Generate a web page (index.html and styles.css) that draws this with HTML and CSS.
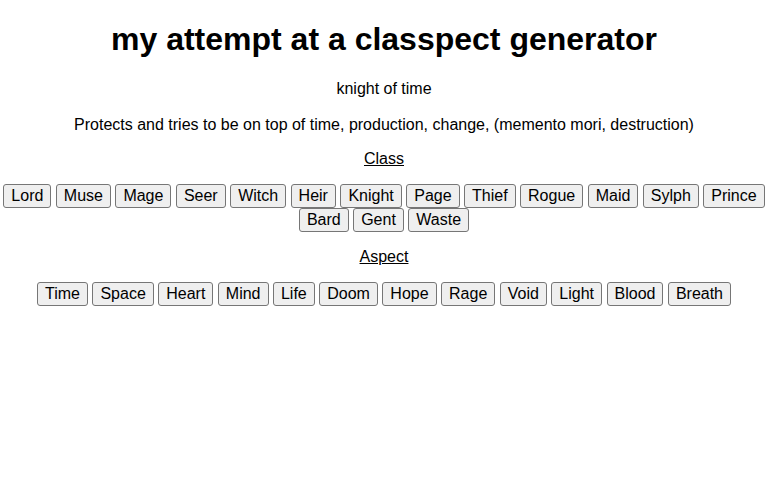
FILE: index.html
```html
<!DOCTYPE html>
<html lang="en">
<head>
    <meta charset="UTF-8">
    <meta name="viewport" content="width=device-width, initial-scale=1.0">
    <title>Classpect Generator</title>
    <link rel="stylesheet" href="styles.css">
</head>
<body>
    <h1>my attempt at a classpect generator</h1>

    <p id="result">knight of time</p>
    <p id="description">Protects and tries to be on top of time, production, change, (memento mori, destruction)</p>

    <p class="label">Class</p>
    <div class="choices">
        <button class="choice">Lord</button>
        <button class="choice">Muse</button>
        <button class="choice">Mage</button>
        <button class="choice">Seer</button>
        <button class="choice">Witch</button>
        <button class="choice">Heir</button>
        <button class="choice">Knight</button>
        <button class="choice">Page</button>
        <button class="choice">Thief</button>
        <button class="choice">Rogue</button>
        <button class="choice">Maid</button>
        <button class="choice">Sylph</button>
        <button class="choice">Prince</button>
        <button class="choice">Bard</button>
        <button class="choice">Gent</button>
        <button class="choice">Waste</button>
    </div>

    <p class="label">Aspect</p>
    <div class="choices">
        <button class="choice">Time</button>
        <button class="choice">Space</button>
        <button class="choice">Heart</button>
        <button class="choice">Mind</button>
        <button class="choice">Life</button>
        <button class="choice">Doom</button>
        <button class="choice">Hope</button>
        <button class="choice">Rage</button>
        <button class="choice">Void</button>
        <button class="choice">Light</button>
        <button class="choice">Blood</button>
        <button class="choice">Breath</button>
    </div>
</body>
</html>
```

FILE: styles.css
```css
body {
    font-family: "Liberation Sans", Arial, sans-serif;
    margin: 0;
    text-align: center;
    color: #000;
    background: #fff;
}
#description {
    margin-top: 18px;
}
.label {
    text-decoration: underline;
}
.choices {
    line-height: 24px;
}
.choice {
    font-family: "Liberation Sans", Arial, sans-serif;
    font-size: 16px;
    color: #000;
    background: #efefef;
    border: 1px solid #767676;
    border-radius: 3px;
    padding: 2px 7px;
    line-height: 18px;
    vertical-align: top;
}
```
